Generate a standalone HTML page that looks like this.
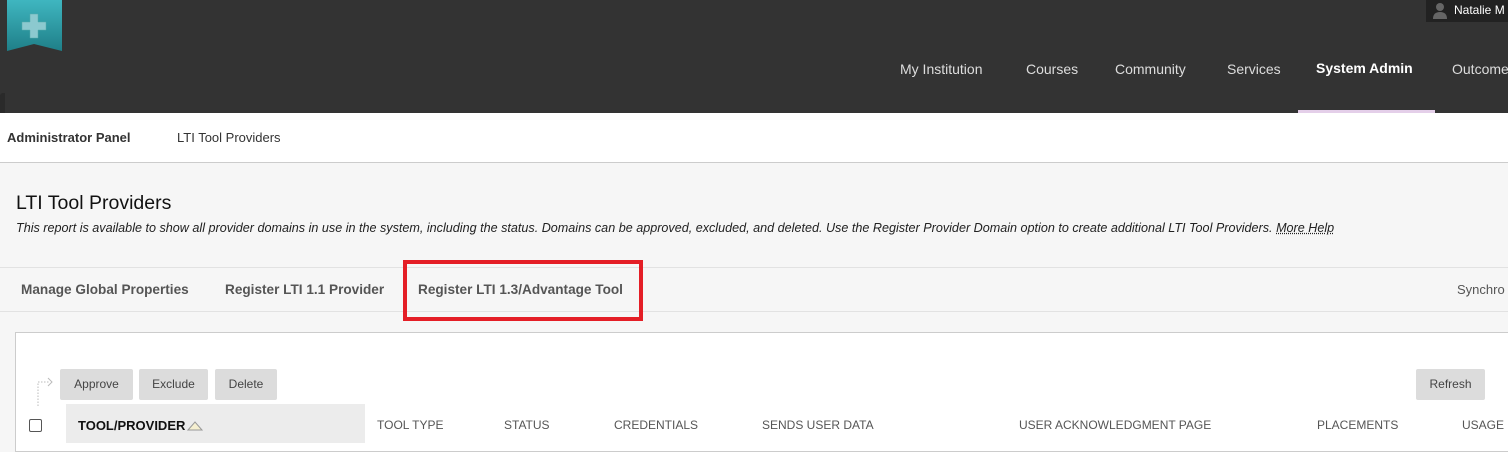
<!DOCTYPE html>
<html><head><style>
*{margin:0;padding:0;box-sizing:border-box}
body{width:1508px;height:443px;overflow:hidden;background:#f6f6f6;font-family:"Liberation Sans",sans-serif;position:relative}
.a{position:absolute;white-space:nowrap}
</style></head><body>
<div class="a" style="left:0;top:0;width:1508px;height:113px;background:#333"></div>
<div class="a" style="left:0;top:93px;width:5px;height:20px;background:#2a2a2a;border-radius:3px 0 0 0"></div>
<svg class="a" style="left:7px;top:0" width="56" height="52"><defs><linearGradient id="g" x1="0" y1="0" x2="0" y2="1"><stop offset="0" stop-color="#3fb6c0"/><stop offset="1" stop-color="#1f7f88"/></linearGradient></defs><path d="M0 0H55V51L27 44L0 51Z" fill="url(#g)"/><path d="M23 14h8v8h8v8h-8v8h-8v-8h-8v-8h8z" fill="#8cc9cf" stroke="#5aa" stroke-width="0.5"/></svg>
<div class="a" style="left:1426px;top:0;width:82px;height:22px;background:#222"></div>
<svg class="a" style="left:1432px;top:2px" width="16" height="17"><circle cx="8" cy="5" r="4" fill="#666"/><path d="M1 17Q1 10 8 10Q15 10 15 17Z" fill="#666"/></svg>
<div class="a" style="left:1454px;top:3px;font-size:12px;color:#fff">Natalie M</div>
<div class="a" style="left:900px;top:61px;font-size:14px;color:#ddd">My Institution</div>
<div class="a" style="left:1026px;top:61px;font-size:14px;color:#ddd">Courses</div>
<div class="a" style="left:1115px;top:61px;font-size:14px;color:#ddd">Community</div>
<div class="a" style="left:1227px;top:61px;font-size:14px;color:#ddd">Services</div>
<div class="a" style="left:1316px;top:60px;font-size:14px;font-weight:bold;color:#fff">System Admin</div>
<div class="a" style="left:1452px;top:61px;font-size:14px;color:#ddd">Outcome</div>
<div class="a" style="left:1298px;top:110px;width:137px;height:3px;background:#e4cfe9"></div>
<div class="a" style="left:0;top:113px;width:1508px;height:50px;background:#fff;border-bottom:1px solid #ccc"></div>
<div class="a" style="left:7px;top:130px;font-size:13px;font-weight:bold;color:#333">Administrator Panel</div>
<div class="a" style="left:177px;top:130px;font-size:13px;color:#333">LTI Tool Providers</div>
<div class="a" style="left:16px;top:192px;font-size:19.5px;color:#111">LTI Tool Providers</div>
<div class="a" style="left:16px;top:221px;font-size:12.6px;font-style:italic;color:#222">This report is available to show all provider domains in use in the system, including the status. Domains can be approved, excluded, and deleted. Use the Register Provider Domain option to create additional LTI Tool Providers. <span style="text-decoration:underline dotted">More Help</span></div>
<div class="a" style="left:0;top:267px;width:1508px;height:45px;border-top:1px solid #e2e2e2;border-bottom:1px solid #e2e2e2"></div>
<div class="a" style="left:21px;top:282px;font-size:13.6px;font-weight:bold;color:#555">Manage Global Properties</div>
<div class="a" style="left:225px;top:282px;font-size:13.6px;font-weight:bold;color:#555">Register LTI 1.1 Provider</div>
<div class="a" style="left:418px;top:282px;font-size:13.6px;font-weight:bold;color:#555">Register LTI 1.3/Advantage Tool</div>
<div class="a" style="left:1457px;top:282px;font-size:13px;color:#555">Synchro</div>
<div class="a" style="left:403px;top:260px;width:240px;height:61px;border:4px solid #e41e26"></div>
<div class="a" style="left:15px;top:332px;width:1500px;height:120px;background:#fff;border:1px solid #ccc"></div>
<svg class="a" style="left:36px;top:376px" width="20" height="30"><path d="M2 30V6H14" fill="none" stroke="#bbb" stroke-dasharray="1.5 1.5"/><path d="M12 2L16 6L12 10" fill="none" stroke="#bbb"/></svg>
<div class="a" style="left:60px;top:369px;width:73px;height:31px;background:#dcdcdc;border-radius:2px;font-size:12px;color:#444;text-align:center;line-height:31px">Approve</div>
<div class="a" style="left:139px;top:369px;width:69px;height:31px;background:#dcdcdc;border-radius:2px;font-size:12px;color:#444;text-align:center;line-height:31px">Exclude</div>
<div class="a" style="left:215px;top:369px;width:62px;height:31px;background:#dcdcdc;border-radius:2px;font-size:12px;color:#444;text-align:center;line-height:31px">Delete</div>
<div class="a" style="left:1416px;top:369px;width:69px;height:31px;background:#dcdcdc;border-radius:2px;font-size:12px;color:#444;text-align:center;line-height:31px">Refresh</div>
<div class="a" style="left:66px;top:404px;width:299px;height:39px;background:#ececec"></div>
<div class="a" style="left:29px;top:419px;width:13px;height:13px;border:1px solid #555;border-radius:2px;background:#fff"></div>
<div class="a" style="left:78px;top:418px;font-size:13px;font-weight:bold;color:#111">TOOL/PROVIDER</div>
<svg class="a" style="left:187px;top:419px" width="16" height="12"><path d="M1 11L8 3L15 11Z" fill="#f5efd0" stroke="#999"/></svg>
<div class="a" style="left:377px;top:418px;font-size:12px;color:#555">TOOL TYPE</div>
<div class="a" style="left:504px;top:418px;font-size:12px;color:#555">STATUS</div>
<div class="a" style="left:614px;top:418px;font-size:12px;color:#555">CREDENTIALS</div>
<div class="a" style="left:762px;top:418px;font-size:12px;color:#555">SENDS USER DATA</div>
<div class="a" style="left:1019px;top:418px;font-size:12px;color:#555">USER ACKNOWLEDGMENT PAGE</div>
<div class="a" style="left:1317px;top:418px;font-size:12px;color:#555">PLACEMENTS</div>
<div class="a" style="left:1462px;top:418px;font-size:12px;color:#555">USAGE</div>
</body></html>
